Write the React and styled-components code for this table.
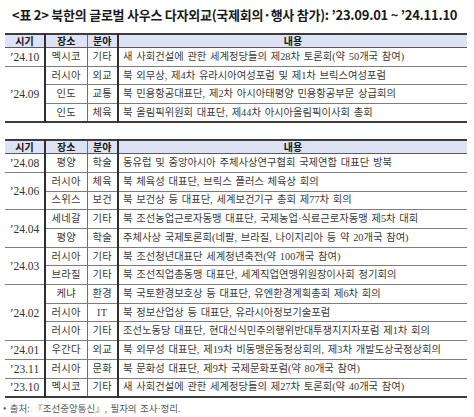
import React from 'react'
import styled, { createGlobalStyle } from 'styled-components'

const GlobalStyle = createGlobalStyle`
  html, body {
    margin: 0;
    padding: 0;
    background: #fff;
  }
  body {
    font-family: "Liberation Serif", "Noto Sans CJK KR", serif;
  }
`

const Page = styled.div`
  width: 474px;
  padding: 4px 7px 0 5px;
  box-sizing: border-box;
`

const Title = styled.h1`
  margin: 0 0 0 7px;
  height: 29px;
  font-family: "Noto Sans CJK KR", sans-serif;
  font-weight: 700;
  font-size: 13px;
  line-height: 22px;
  letter-spacing: -0.25px;
  color: #1a1a1a;
`

const Table = styled.table`
  width: 462px;
  border-collapse: collapse;
  table-layout: fixed;
  border-top: 2px solid #3c3c3c;
  border-bottom: 2px solid #3c3c3c;
  margin-bottom: ${p => p.$gap || 0}px;
`

const edges = {
  thick: '2px solid #2e2e2e',
  thin: '1px solid #6e6e6e',
  none: 'none',
}

const Head = styled.th`
  height: 12px;
  padding: 0;
  background: #dde3f4;
  border-bottom: 1px solid #5a5a5a;
  border-left: ${p => edges[p.$edge || 'none']};
  font-family: "Noto Sans CJK KR", sans-serif;
  font-weight: 700;
  font-size: 10px;
  line-height: 12px;
  color: #151515;
  text-align: center;
`

const Row = styled.tr`
  height: 18.7px;
`

const Cell = styled.td`
  padding: 0 ${p => (p.$left ? '4px' : '0')};
  border-bottom: 1px solid #7d7d7d;
  border-left: ${p => edges[p.$edge || 'none']};
  font-size: 10.3px;
  line-height: 12px;
  word-spacing: ${p => (p.$left ? '1.2px' : '0')};
  letter-spacing: ${p => (p.$left ? '0' : '0.3px')};
  color: #3b3b3b;
  text-align: ${p => (p.$left ? 'left' : 'center')};
  white-space: nowrap;
  overflow: hidden;
`

const Period = styled(Cell)`
  font-size: 11.5px;
  letter-spacing: 0;
  color: #333;
`

const Note = styled.p`
  margin: 5px 0 0 -2px;
  font-size: 9.5px;
  color: #555;
  line-height: 12px;
  word-spacing: 1px;
`

const firstTable = [
  { period: '’24.10', items: [['멕시코', '기타', '새 사회건설에 관한 세계정당들의 제28차 토론회(약 50개국 참여)']] },
  {
    period: '’24.09',
    items: [
      ['러시아', '외교', '북 외무상, 제4차 유라시아여성포럼 및 제1차 브릭스여성포럼'],
      ['인도', '교통', '북 민용항공대표단, 제2차 아시아태평양 민용항공부문 상급회의'],
      ['인도', '체육', '북 올림픽위원회 대표단, 제44차 아시아올림픽이사회 총회'],
    ],
  },
]

const secondTable = [
  { period: '’24.08', items: [['평양', '학술', '동유럽 및 중앙아시아 주체사상연구협회 국제연합 대표단 방북']] },
  {
    period: '’24.06',
    items: [
      ['러시아', '체육', '북 체육성 대표단, 브릭스 플러스 체육상 회의'],
      ['스위스', '보건', '북 보건상 등 대표단, 세계보건기구 총회 제77차 회의'],
    ],
  },
  {
    period: '’24.04',
    items: [
      ['세네갈', '기타', '북 조선농업근로자동맹 대표단, 국제농업·식료근로자동맹 제5차 대회'],
      ['평양', '학술', '주체사상 국제토론회(네팔, 브라질, 나이지리아 등 약 20개국 참여)'],
    ],
  },
  {
    period: '’24.03',
    items: [
      ['러시아', '기타', '북 조선청년대표단 세계청년축전(약 100개국 참여)'],
      ['브라질', '기타', '북 조선직업총동맹 대표단, 세계직업연맹위원장이사회 정기회의'],
    ],
  },
  {
    period: '’24.02',
    items: [
      ['케냐', '환경', '북 국토환경보호상 등 대표단, 유엔환경계획총회 제6차 회의'],
      ['러시아', 'IT', '북 정보산업상 등 대표단, 유라시아정보기술포럼'],
      ['러시아', '기타', '조선노동당 대표단, 현대신식민주의행위반대투쟁지지자포럼 제1차 회의'],
    ],
  },
  { period: '’24.01', items: [['우간다', '외교', '북 외무성 대표단, 제19차 비동맹운동정상회의, 제3차 개발도상국정상회의']] },
  { period: '’23.11', items: [['러시아', '문화', '북 문화성 대표단, 제9차 국제문화포럼(약 80개국 참여)']] },
  { period: '’23.10', items: [['멕시코', '기타', '새 사회건설에 관한 세계정당들의 제27차 토론회(약 40개국 참여)']] },
]

function EventTable({ groups, gap }) {
  return (
    <Table $gap={gap}>
      <colgroup>
        <col style={{ width: 40 }} />
        <col style={{ width: 42 }} />
        <col style={{ width: 31 }} />
        <col />
      </colgroup>
      <thead>
        <tr>
          <Head>시기</Head>
          <Head $edge="thick">장소</Head>
          <Head $edge="thin">분야</Head>
          <Head $edge="thick">내용</Head>
        </tr>
      </thead>
      <tbody>
        {groups.map(group =>
          group.items.map(([place, field, content], i) => (
            <Row key={group.period + i}>
              {i === 0 && <Period rowSpan={group.items.length}>{group.period}</Period>}
              <Cell $edge="thick">{place}</Cell>
              <Cell $edge="thin">{field}</Cell>
              <Cell $edge="thick" $left>{content}</Cell>
            </Row>
          ))
        )}
      </tbody>
    </Table>
  )
}

export default function App() {
  return (
    <Page>
      <GlobalStyle />
      <Title>&lt;표 2&gt; 북한의 글로벌 사우스 다자외교(국제회의·행사 참가): ’23.09.01 ~ ’24.11.10</Title>
      <EventTable groups={firstTable} gap={16} />
      <EventTable groups={secondTable} />
      <Note>• 출처: 『조선중앙통신』, 필자의 조사·정리.</Note>
    </Page>
  )
}
